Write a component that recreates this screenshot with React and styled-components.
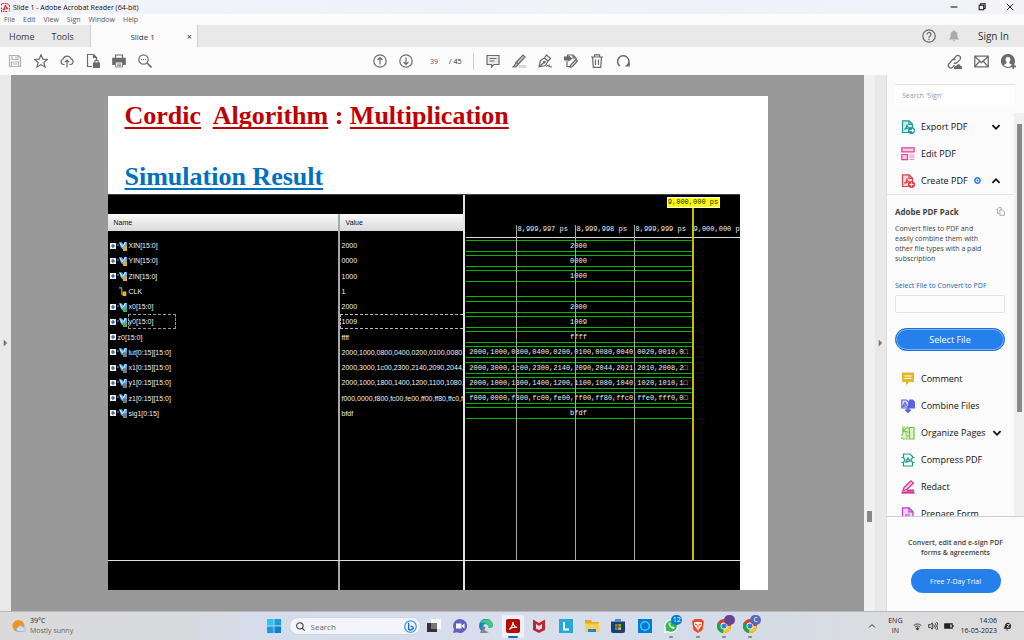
import { useState } from 'react';
import styled, { createGlobalStyle } from 'styled-components';

const GlobalStyle = createGlobalStyle`
    * { box-sizing: border-box; }
    body { margin: 0; font-family: 'Open Sans', 'Noto Sans', sans-serif; color: #333; }
    button, input { font-family: inherit; }
    button { border: 0; background: none; padding: 0; color: inherit; display: flex; align-items: center; justify-content: center; }
    h1, h2, h3, p { margin: 0; }
`

const signals = [
    { name: 'XIN[15:0]', value: '2000', wave: '2000', mark: '#e8a828' },
    { name: 'YIN[15:0]', value: '0000', wave: '0000', mark: '#e8a828' },
    { name: 'ZIN[15:0]', value: '1000', wave: '1000', mark: '#e8a828' },
    { name: 'CLK', value: '1', clock: true },
    { name: 'x0[15:0]', value: '2000', wave: '2000', mark: '#4fae45' },
    { name: 'y0[15:0]', value: '1009', wave: '1009', mark: '#4fae45', selected: true },
    { name: 'z0[15:0]', value: 'ffff', wave: 'ffff' },
    { name: 'lut[0:15][15:0]', value: '2000,1000,0800,0400,0200,0100,0080,00', wave: '2000,1000,0800,0400,0200,0100,0080,0040,0020,0010,0□', mark: '#777' },
    { name: 'x1[0:15][15:0]', value: '2000,3000,1c00,2300,2140,2090,2044,20', wave: '2000,3000,1c00,2300,2140,2090,2044,2021,2010,2008,2□', mark: '#777' },
    { name: 'y1[0:15][15:0]', value: '2000,1000,1800,1400,1200,1100,1080,10', wave: '2000,1000,1800,1400,1200,1100,1080,1040,1020,1010,1□', mark: '#777' },
    { name: 'z1[0:15][15:0]', value: 'f000,0000,f800,fc00,fe00,ff00,ff80,ffc0,f', wave: 'f000,0000,f800,fc00,fe00,ff00,ff80,ffc0,ffe0,fff0,0□', mark: '#777' },
    { name: 'sig1[0:15]', value: 'bfdf', wave: 'bfdf', mark: '#777' },
];

const Svg = styled.svg`
    display: block;
    flex: none;
    width: ${(p) => p.$size || 14}px;
    height: ${(p) => p.$size || 14}px;
    fill: none;
    stroke: currentColor;
    stroke-width: ${(p) => p.$stroke || 1.2};
`

const ClockSvg = styled(Svg)`
    width: 17px;
    height: 11px;
`

function Icon({ size, stroke, children }) {
    return <Svg viewBox="0 0 14 14" $size={size} $stroke={stroke} aria-hidden="true">{children}</Svg>;
}

/* toolbar drawings, all on a 14 unit grid */
const icons = {
    save: <g stroke="#b4b4b4"><path d="M1.5 1.5h9l2 2v9h-11zM4 1.5v4h6v-4M3.5 12.500v-4.500h7v4.500M8 2.500v2M5 10h4" /></g>,
    star: <path d="M7 .8l1.800 4.300 4.600.400-3.500 3 1.100 4.500L7 10.600 3 13l1.100-4.500-3.500-3 4.600-.400z" />,
    cloud: <path d="M4.500 10.500H3.500a2.800 2.800 0 0 1-.3-5.500 4 4 0 0 1 7.600-.2 2.900 2.900 0 0 1-.3 5.700H9.500M7 13.500V6M4.800 8.200L7 6l2.200 2.200" />,
    fileLock: <><path d="M6 12.500H1.500v-12h6l3 3v3M7.500.500v3h3" /><path d="M7.500 9h6v4.500h-6z" fill="currentColor" /><path d="M8.800 9V7.800a1.700 1.700 0 0 1 3.400 0V9" /></>,
    print: <><path d="M3.500 4V1h7v3" /><path d="M.8 4.300h12.400v6H11V8H3v2.300H.8z" fill="currentColor" /><path d="M3.500 8v5h7V8M5 10h4M5 11.500h4" strokeWidth=".8" /></>,
    zoom: <><circle cx="5.500" cy="5.500" r="4.700" /><path d="M9 9l4.500 4.500" strokeWidth="1.600" /><path d="M3 5.500h1M5 5.500h1M7 5.500h1" /></>,
    up: <><circle cx="7" cy="7" r="6.200" /><path d="M7 10.500v-7M4.500 6L7 3.500 9.500 6" /></>,
    down: <><circle cx="7" cy="7" r="6.200" /><path d="M7 3.500v7M4.500 8L7 10.500 9.500 8" /></>,
    comment: <path d="M1 1.500h12v9H8l-2.500 2.500v-2.500H1zM3.500 4.500h7M3.500 7h5" fill="#e9e9e9" />,
    marker: <><path d="M7 12.500h7" stroke="#d8d8d8" strokeWidth="3" /><path d="M4 8.500L11 1l2.200 2L6.500 10zM4 8.500L3.200 10.500 1 13h3l1.200-1.500L6.500 10z" fill="#c8c8c8" /></>,
    sign: <><path d="M1 12.800L2.500 6.500 6.500 4l3.500 3-2.500 4.500zM1 12.800L6 8.500M6.500 4L8.500 1 12.500 4.500 10 7M8.500 12.800c1.500-2.500 1.500 0 2.500-1.300 0 1.300 1 1.300 2.800 1.300" /><circle cx="6.300" cy="8.200" r=".8" fill="currentColor" /></>,
    edit: <><path d="M3.500 3V1H9l3 3v2M9 1v3h3M3 7v5.500h3.500" /><path d="M.5 3h4v3h-4z" fill="currentColor" /><path d="M5 2.500l2.500 2L5 6.500z" fill="currentColor" /><path d="M13.500 7L8.500 12.500l-2.300.8.500-2.300L12 5.500z" fill="#ddd" /></>,
    trash: <path d="M1 3h12M4.500 3V.8h5V3M2.500 3l.8 10.300h7.400L11.500 3M5.500 5.500v5.500M8.500 5.500v5.500" />,
    rotate: <><path d="M3.800 12A5.700 5.700 0 1 1 11.800 11" strokeWidth="1.500" /><path d="M13.800 7.500v5H8.800z" fill="currentColor" stroke="none" /></>,
    link: <><path d="M5.500 5.500l3-3.500a2.400 2.400 0 0 1 3.700 3L9.500 8a2.400 2.400 0 0 1-3 .3M8 5.500a2.400 2.400 0 0 0-3.300.3l-3 3.500a2.400 2.400 0 0 0 3.500 3.200L7 10.500" /><path d="M7 13.500c0-2 1.500-2 2-2 1-2 3-1.500 3 0 2 0 2 2 1 2z" fill="currentColor" /></>,
    mail: <path d="M.7 2h12.600v10H.7zM1 2.500l6 5.500 6-5.500M1 11.500l4.500-5M13 11.500l-4.500-5" />,
    person: <><circle cx="6.500" cy="6.500" r="6" fill="currentColor" /><path d="M6.500 2.500a2.400 2.700 0 0 1 1.300 4.900v1.200l2.700 1.600a5 5 0 0 1-8 0l2.700-1.600V7.400A2.400 2.700 0 0 1 6.500 2.500z" fill="#fff" stroke="none" /><path d="M11.500 9v5M9 11.500h5" strokeWidth="1.600" /></>,
    help: <><circle cx="7" cy="7" r="6.200" /><path d="M5 5.500a2 2 0 1 1 2.800 1.800c-.8.400-.8.700-.8 1.400M7 9.800v1.200" /></>,
    bell: <path d="M7 0l1 1.300c2.500.7 3 2.700 3 5.200 0 2 .6 3 2 4.500H1c1.400-1.500 2-2.500 2-4.500 0-2.500.500-4.500 3-5.200zM5.500 12h3L7 13.800z" fill="#aaa" stroke="none" />,
};

const Screen = styled.div`
    display: flex;
    flex-direction: column;
    height: 100vh;
    overflow: hidden;
    background: #fbfbfb;
`

const TitleBar = styled.header`
    display: flex;
    align-items: center;
    gap: 3px;
    height: 14px;
    padding: 0 10px 0 1px;
    font-size: 7px;
    color: #111;
    background: linear-gradient(90deg, #f3f3f8, #edf2fb 40%, #edf3f7 55%, #edf2fb 75%, #f3f3f8);
`

const WindowButtons = styled.div`
    display: flex;
    gap: 20px;
    margin-left: auto;
`

const MenuBar = styled.nav`
    display: flex;
    gap: 8px;
    height: 11px;
    padding-left: 4px;
    button { font-size: 7px; line-height: 11px; color: #555; }
`

const TabBar = styled.div`
    display: flex;
    height: 22px;
    background: #e9e9e9;
    font-size: 8px;
    color: #333;
`

const HomeTabs = styled.div`
    display: flex;
    gap: 17px;
    width: 90px;
    padding-left: 9px;
    button { font-size: 9px; }
`

const ActiveTab = styled.div`
    display: flex;
    align-items: center;
    justify-content: flex-end;
    gap: 32px;
    width: 108px;
    padding-right: 5px;
    background: #fbfbfb;
    border: solid #d0d0d0;
    border-width: 0 1px;
    button { font-size: 9px; }
`

const Account = styled.div`
    display: flex;
    align-items: center;
    gap: 12px;
    margin-left: auto;
    padding-right: 15px;
    color: #666;
`

const SignIn = styled.button`
    margin-left: 6px;
    font-size: 10px;
    color: #333;
`

const Toolbar = styled.div`
    display: flex;
    align-items: center;
    height: 28px;
    padding-right: 8px;
    color: #6b6b6b;
`

const Tools = styled.div`
    display: flex;
    align-items: center;
    gap: 12px;
    padding-left: 8px;
    min-width: ${(p) => p.$wide ? '365px' : '0'};
    margin-left: ${(p) => p.$end ? 'auto' : '0'};
`

const PageBox = styled.label`
    display: flex;
    align-items: center;
    gap: 7px;
    font-size: 7px;
    color: #222;
    padding: 0 12px 0 5px;
    border-right: 1px solid #ccc;
    height: 17px;
    input { width: 12px; border: 0; padding: 0; background: none; font-size: 7px; color: #555; }
`

const Body = styled.div`
    display: flex;
    flex: 1;
    min-height: 0;
`

const Rail = styled.button`
    width: 11px;
    background: #e9e9e9;
    color: #777;
`

const Desk = styled.main`
    flex: 1;
    min-width: 0;
    padding: 21px 10px;
    background: #999;
    overflow: hidden;
`

const Slide = styled.article`
    max-width: 660px;
    margin: 0 auto;
    padding-top: 3px;
    background: #fff;
    font-family: 'Liberation Serif', serif;
`

const SlideHeading = styled.h1`
    padding-left: 17px;
    height: ${(p) => p.$sub ? '34px' : '61px'};
    font-size: 26px;
    line-height: 34px;
    font-weight: 700;
    white-space: pre;
    color: ${(p) => p.$sub ? '#0070c0' : '#c00000'};
    u { text-decoration-thickness: 2px; text-underline-offset: 3px; text-decoration-skip-ink: none; }
`

const Simulator = styled.section`
    display: grid;
    grid-template-columns: 355px 2px 1fr;
    max-width: 632px;
    height: 396px;
    background: #000;
    color: #f0f0f0;
    border-top: 1px solid #444;
    font: 7px/10px 'Liberation Sans', sans-serif;
`

const Divider = styled.div`
    background: #e4e4e4;
`

const Pane = styled.div`
    position: relative;
    display: flex;
    flex-direction: column;
    min-width: 0;
    overflow: hidden;
`

const PaneFoot = styled.div`
    height: 30px;
    margin-top: auto;
    border-top: 1px solid #ddd;
`

const SignalPane = styled(Pane)`
    padding-top: 19px;
    background: linear-gradient(#a8a8a8, #a8a8a8) 230px 19px / 2px 100% no-repeat;
`

const SignalTable = styled.table`
    display: block;
    thead { display: block; margin-bottom: 7px; }
    tbody { display: grid; grid-template-rows: repeat(12, 1fr); height: 183px; }
    tr { display: grid; grid-template-columns: 230px 123px; column-gap: 2px; align-items: center; }
    th, td { padding: 0; min-width: 0; white-space: nowrap; text-align: left; font-weight: 400; }
    th { height: 17px; padding-left: 6px; line-height: 17px; color: #111; background: linear-gradient(#fafafa, #d9d9dc); }
`

const NameCell = styled.td`
    display: flex;
    align-items: center;
    gap: 1px;
    padding-left: 2px !important;
`

const SignalName = styled.span`
    line-height: 13px;
    border: 1px dashed ${(p) => p.$selected ? '#999' : 'transparent'};
    min-width: ${(p) => p.$selected ? '48px' : '0'};
`

const ValueCell = styled.td`
    overflow: hidden;
    padding-left: 1px !important;
    line-height: 13px;
    border: 1px dashed ${(p) => p.$selected ? '#bbb' : 'transparent'};
    border-right: 0;
`

const WavePane = styled(Pane)`
    font-family: 'Liberation Mono', monospace;
`

const Ruler = styled.div`
    height: 43px;
    flex: none;
    margin-left: 1px;
    border-bottom: 1px solid #ddd;
`

const Waves = styled.div`
    display: grid;
    grid-template-rows: repeat(12, 1fr);
    align-items: center;
    width: 227px;
    height: 183px;
    margin-left: 1px;
`

const Wave = styled.div`
    height: 12px;
    line-height: 11px;
    text-align: center;
    white-space: nowrap;
    border: 1px solid #00b800;
    border-top-color: ${(p) => p.$clock ? 'transparent' : '#00b800'};
    border-right-color: ${(p) => p.$clock ? 'transparent' : '#00b800'};
    border-left: 0;
    border-radius: 0 2px 2px 0;
`

const TimeGrid = styled.div`
    position: absolute;
    inset: 30px 0 30px 0;
    display: grid;
    grid-template-columns: 51px repeat(3, 59px) 1fr;
`

const Tick = styled.span`
    padding-left: 1px;
    line-height: 8px;
    white-space: nowrap;
    overflow: hidden;
    border-left: ${(p) => p.$last ? '0' : '1px solid #a8a8a8'};
`

const Cursor = styled.div`
    position: absolute;
    top: 2px;
    bottom: 30px;
    left: 202px;
    width: 53px;
    text-align: center;
    color: #222;
    background: linear-gradient(#c4c000, #c4c000) 25px 0 / 2px 100% no-repeat;
    span { display: block; background: #ffff00; border: 1px solid #fff; line-height: 9px; white-space: nowrap; }
`

const ScrollTrack = styled.div`
    display: flex;
    justify-content: center;
    width: ${(p) => p.$width}px;
    padding-top: ${(p) => p.$offset}px;
    background: #f0f0f0;
`

const ScrollThumb = styled.div`
    width: 5px;
    height: ${(p) => p.$length}px;
    background: #888;
`

const Panel = styled.aside`
    display: flex;
    flex-direction: column;
    width: 138px;
    background: #fbfbfb;
    border-left: 1px solid #ddd;
`

const Search = styled.input`
    flex: none;
    height: 22px;
    margin: 9px 9px 7px 8px;
    padding: 0 7px;
    min-width: 0;
    border: 0;
    border-top: 1px solid #e4e4e4;
    background: #fff;
    font-size: 7px;
    &::placeholder { color: #999; }
`

const PanelScroll = styled.div`
    display: flex;
    flex: 1;
    min-height: 0;
    overflow: hidden;
`

const PanelList = styled.div`
    flex: 1;
    min-width: 0;
`

const ToolItem = styled.button`
    width: 100%;
    height: 27px;
    gap: 6px;
    padding: 0 13px 0 14px;
    justify-content: flex-start;
    font-size: 9px;
    white-space: nowrap;
    color: #111;
    > :nth-child(3):last-child, > :nth-child(4) { margin-left: auto; }
`

const Pack = styled.section`
    padding: 12px 9px 14px 8px;
    border-top: 1px solid #e2e2e2;
    font-size: 7px;
    line-height: 10px;
    color: #444;
    h3 { display: flex; justify-content: space-between; font-size: 8px; line-height: 10px; margin-bottom: 7px; color: #444; }
    label { display: block; margin-top: 17px; color: #2463a8; white-space: nowrap; }
    input { width: 100%; height: 18px; margin: 4px 0 15px; display: block; border: 1px solid #e4e4e4; border-radius: 2px; background: #fdfdfd; }
`

const BlueButton = styled.button`
    height: ${(p) => p.$small ? '24px' : '23px'};
    width: ${(p) => p.$small ? '90px' : '100%'};
    font-size: ${(p) => p.$small ? '7px' : '9px'};
    border-radius: 12px;
    border: ${(p) => p.$small ? '0' : '1px solid #1b6fd6'};
    box-shadow: ${(p) => p.$small ? 'none' : 'inset 0 0 0 1px #80b4f4'};
    background: #2680eb;
    color: #fff;
`

const Trial = styled.footer`
    display: flex;
    flex-direction: column;
    align-items: center;
    height: 95px;
    padding-top: 21px;
    border-top: 1px solid #ccc;
    font-size: 7px;
    line-height: 10px;
    text-align: center;
    color: #444;
    font-weight: 600;
    p { margin-bottom: 11px; }
`

const Taskbar = styled.footer`
    display: grid;
    grid-template-columns: 1fr auto 1fr;
    align-items: center;
    height: 29px;
    border-top: 1px solid #b8b8bc;
    background: linear-gradient(90deg, #dadada, #d9dadd 17%, #d5dcec 26%, #d8deec 50%, #d3dce8 72%, #dcdcde 88%, #dcdcdc);
`

const Weather = styled.div`
    display: flex;
    align-items: center;
    gap: 4px;
    padding-left: 12px;
    font-size: 7px;
    line-height: 10px;
    color: #666;
    strong { display: block; font-weight: 400; color: #222; }
`

const Dock = styled.div`
    display: flex;
    align-items: center;
    padding-left: 6px;
`

const TaskSearch = styled.label`
    display: flex;
    align-items: center;
    gap: 6px;
    width: 132px;
    height: 18px;
    margin-left: 8px;
    padding: 0 3px 0 6px;
    border-radius: 9px;
    border: 1px solid #d0d4e0;
    background: #f3f5fa;
    input { flex: 1; min-width: 0; border: 0; padding: 0; background: none; font-size: 8px; }
    input::placeholder { color: #666; }
`

const Apps = styled.div`
    display: grid;
    grid-template-columns: repeat(13, 1fr);
    width: 343px;
`

const AppButton = styled.button`
    position: relative;
    justify-self: center;
    width: 22px;
    height: 23px;
    border-radius: 2px;
    background: ${(p) => p.$active ? '#eef1f8' : 'none'};
    &::after {
        content: '';
        position: absolute;
        bottom: 0;
        width: ${(p) => p.$active ? '10px' : '4px'};
        height: 2px;
        border-radius: 1px;
        background: ${(p) => p.$active ? '#0a6fd0' : p.$open ? '#888' : 'transparent'};
    }
`

const Badge = styled.span`
    position: absolute;
    top: 0;
    right: 0;
    width: 11px;
    height: 10px;
    border-radius: 5px;
    background: ${(p) => p.$color};
    color: #fff;
    font-size: 7px;
    line-height: 10px;
`

const Tray = styled.div`
    display: flex;
    align-items: center;
    justify-content: flex-end;
    gap: 6px;
    padding-right: 12px;
    font-size: 7px;
    line-height: 10px;
    color: #222;
    text-align: center;
    > svg:first-child { margin-right: 6px; }
    > span:first-of-type { margin-right: 5px; }
    span:last-of-type { text-align: right; }
`

function Chevron({ up }) {
    return <Icon size={10} stroke={2.6}><path d={up ? 'M2 9.500l5-5 5 5' : 'M2 4.500l5 5 5-5'} /></Icon>;
}

function Doc({ color, badge }) {
    return (
        <g stroke={color}>
            <path d="M1.500.800h6.500l3.500 3.500v8.200h-10z" fill={color} fillOpacity=".18" />
            <path d="M8 .800v3.500h3.500M3.500 9.500c1.500-1 2.500-3 2.500-5 0 2 1.500 3.500 3 3.500-2 0-4 .5-5.500 1.500z" />
            <circle cx="10.500" cy="10.500" r="3" fill={color} /><path d={badge} stroke="#fff" />
        </g>
    );
}

const toolIcons = {
    export: <Doc color="#1c9a92" badge="M8.500 10.500h4M11 9l1.500 1.500L11 12" />,
    editPdf: <g stroke="#dc45a0"><path d="M.8.800h12.400v4H.8zM.8 7.500h5.700v5.200H.8z" fill="#f9c8e4" /><path d="M8.500 8h5M8.500 10.200h5M8.500 12.500h5" stroke="#f08cc8" /></g>,
    create: <Doc color="#e03f48" badge="M10.500 8.500v4M8.500 10.500h4" />,
    comment: <><path d="M1 .500h12v9.500H8l-3 3.500V10H1z" fill="#e0b828" stroke="none" /><path d="M3.500 4h7M3.500 6.500h7" stroke="#fff" /></>,
    combine: <g stroke="#6161e6"><path d="M.8 1h4.700l2 2v6H.8z" fill="#dedefa" /><path d="M8.500 1h3l2 2v6h-5z" fill="#6161e6" /><path d="M2 7.500l2-4 1.500 3z" /><path d="M7 7v6M4.500 10.500L7 13l2.500-2.500" strokeWidth="1.800" /></g>,
    organize: <g stroke="#7cc444"><path d="M8.500 1.500H13v11.500H8.500z" fill="#dff2d0" /><path d="M1 7h4.500v6H1z" fill="#dff2d0" strokeDasharray="2 1" /><path d="M1 1h3M7 .500v13" strokeDasharray="3 1" /><path d="M6 1.500L2 5M2 2v3.500h4" strokeWidth="1.500" /></g>,
    compress: <g stroke="#1c9a92"><path d="M2.500 4V1h6.500l2.500 2.500V4M2.500 10v3h9v-3" /><path d="M2 4.500h10v5H2z" fill="#d2efed" stroke="none" /><path d="M.5 4.500h2L4 7 2.500 9.500h-2M13.500 4.500h-2L10 7l1.500 2.500h2M5 9l2-4 2 3z" /></g>,
    redact: <g stroke="#d8358c"><path d="M.500 12.500h13" strokeWidth="2.200" /><path d="M2 10.500L3 7.500 10 .800l2.500 2.400-7 6.500z" fill="#f8c4df" /><path d="M6 10.500h7" strokeWidth="2" /></g>,
    prepare: <g stroke="#b63ec8"><path d="M1.500.800h6.500l4 4v8.500h-10.500z" fill="#f0d0f4" /><path d="M8 .800v4h4M4 8h5" /></g>,
};

function PanelItem({ icon, text, chevron, plus }) {
    return (
        <ToolItem>
            <Icon>{toolIcons[icon]}</Icon>
            <span>{text}</span>
            {plus && <Icon size={7}><circle cx="7" cy="7" r="5.300" fill="#fff" stroke="#2680eb" strokeWidth="3" /><path d="M7 4.500v5M4.500 7h5" stroke="#2680eb" strokeWidth="1.500" /></Icon>}
            {chevron && <Chevron up={chevron === 'up'} />}
        </ToolItem>
    );
}

function SignalIcons({ signal }) {
    if (signal.clock) {
        return <ClockSvg viewBox="0 0 17 12"><path d="M9 2h3v7h2" stroke="#78b070" /><path d="M13 6h4v5h-4z" fill="#e8b830" stroke="none" /></ClockSvg>;
    }
    return (
        <>
            <Svg viewBox="0 0 6 6" $size={6}><path d="M0 0h6v6H0z" fill="#eee" stroke="none" /><path d="M1 3h4M3 1v4" stroke="#224a9a" /></Svg>
            {signal.mark && (
                <Svg viewBox="0 0 10 10" $size={10}>
                    <path d="M0 4h2" stroke="#999" />
                    <path d="M2 1l3 .5 1.500 2L7.500 1H10v5L6 8.500 4 7z" fill="#55a9e4" stroke="none" />
                    <path d="M3 2l2.500 4M8.500 1l-2 4" stroke="#c9e8ff" />
                    <path d="M6 5.500h4V10H6z" fill={signal.mark} stroke="none" />
                </Svg>
            )}
        </>
    );
}

function Chrome() {
    return (
        <g stroke="none"><circle cx="7" cy="7" r="7" fill="#e33b2e" /><path d="M7 7L1 3.300A7 7 0 0 0 7 14z" fill="#25a04b" /><path d="M7 7h7a7 7 0 0 1-7 7l-1-.1z" fill="#f8c922" /><circle cx="7" cy="7" r="3.400" fill="#fff" /><circle cx="7" cy="7" r="2.600" fill="#377be8" /></g>
    );
}

const apps = [
    { label: 'Task view', art: <g stroke="none"><path d="M4 0h10v10H4z" fill="#f8f8f8" /><path d="M0 4h10v9H0z" fill="#333" /><path d="M4 4h6v6H4z" fill="#777" /></g> },
    { label: 'Chat', art: <g stroke="none"><path d="M7 0a7 7 0 1 1-3 13.300L0 14l1-3.500A7 7 0 0 1 7 0z" fill="#6460bd" /><path d="M3 4.500h5.500v5H3zM9 6.500l2.500-2v5L9 7.500z" fill="#fff" /></g> },
    { label: 'Edge', art: <g stroke="none"><path d="M0 7a7 7 0 0 1 14-.5C14 9 10 9.500 9 8c1-3-3-4-4.500-2C2 9 5 13 10 13A7 7 0 0 1 0 7z" fill="#1685cf" /><path d="M1 4a7 7 0 0 1 13 2.500C14 9 10 9.500 9 8c0-4-5-5-8-4z" fill="#43c77a" /><circle cx="4.500" cy="9" r="1.800" fill="#777" /><path d="M1 14c0-4 7-4 7 0z" fill="#888" /></g> },
    { label: 'Acrobat', active: true, art: <><rect width="14" height="14" rx="2" fill="#b30b00" stroke="none" /><path d="M3 10.500c2-1 4-4.500 4-7.500 0 3 2 5.500 4.200 5.500C9 8 5.500 8.500 3 10.500z" stroke="#fff" /></> },
    { label: 'McAfee', art: <path d="M1 .500l6 3.500 6-3.500V11l-6 3-6-3zM4 5v4.500L7 11l3-1.500V5L7 7z" fill="#bd2630" fillRule="evenodd" stroke="none" /> },
    { label: 'Lenovo', art: <><path d="M0 0h14v14H0z" fill="#27a9d6" stroke="none" /><path d="M5 3v7.500h5" stroke="#fff" strokeWidth="2" /></> },
    { label: 'Files', art: <g stroke="none"><path d="M0 1h6l1 2h7v10H0z" fill="#e6a81c" /><path d="M0 4.500h14V13H0z" fill="#ffd057" /><path d="M3 10h8v3H3z" fill="#1686d0" /></g> },
    { label: 'Store', art: <g stroke="none"><path d="M0 2.500h14V12a2 2 0 0 1-2 2H2a2 2 0 0 1-2-2z" fill="#1c3f70" /><path d="M4 2.500V0h6v2.500" fill="#3c8fd0" /><path d="M4 5h2.700v2.700H4z" fill="#f25022" /><path d="M7.300 5H10v2.700H7.300z" fill="#7fba00" /><path d="M4 8.300h2.700V11H4z" fill="#00a4ef" /><path d="M7.300 8.300H10V11H7.300z" fill="#ffb900" /></g> },
    { label: 'Alexa', art: <><path d="M0 0h14v14H0z" fill="#0879d8" stroke="none" /><circle cx="7" cy="7" r="4.300" stroke="#35d0f4" strokeWidth="1.500" /></> },
    { label: 'WhatsApp', open: true, badge: '12', color: '#087bd0', art: <><path d="M7 .800a6.300 6.300 0 1 1-3 11.700L.800 13.300l.8-3.300A6.300 6.300 0 0 1 7 .800z" fill="#32b84e" stroke="#fff" /><path d="M4.500 4c0 3 2.500 5.500 5.500 6l.5-1.800L9 7.500l-1 .8L6 6l.7-1L6 3.500z" fill="#fff" stroke="none" /></> },
    { label: 'Brave', open: true, art: <><path d="M3.500 0h7l1 1.300L13 2l-.5 3-1 6L7 14l-4.500-3L1.500 5 1 2l1.500-.7z" fill="#f0471f" stroke="none" /><path d="M3 3.500l4-.7 4 .7-.5 3.500-2 2L7 12 5.500 9l-2-2z" fill="#fff" stroke="none" /><path d="M4 5l2 1M10 5L8 6M7 6v2.500" stroke="#f0471f" /></> },
    { label: 'Chrome', open: true, badge: ' ', color: '#68438f', art: <Chrome /> },
    { label: 'Chrome C', open: true, badge: 'C', color: '#5968b8', art: <Chrome /> },
];

export default function App() {
    const [page, setPage] = useState('39');
    const [query, setQuery] = useState('');

    return (
        <Screen>
            <GlobalStyle />
            <TitleBar>
                <Svg viewBox="0 0 14 14" $size={9} $stroke={1.6}><g stroke="#e0302a"><path d="M.8 4V.800h9l3.400 3.500V13M.8 7v6.200h9" strokeDasharray="3 1" /><path d="M3 11c2-2 3.500-5 4-8 .5 3 2 5 4 6-3-.5-5 .5-8 2z" /></g></Svg>
                <span>Slide 1 - Adobe Acrobat Reader (64-bit)</span>
                <WindowButtons>
                    <button aria-label="Minimize"><Icon size={8} stroke={1.8}><path d="M1 7h12" /></Icon></button>
                    <button aria-label="Restore"><Icon size={8} stroke={1.8}><path d="M2 4h8v8H2zM4.500 4V1.500h8v8H10" /></Icon></button>
                    <button aria-label="Close"><Icon size={8} stroke={1.6}><path d="M1.500 1.500l11 11M12.500 1.500l-11 11" /></Icon></button>
                </WindowButtons>
            </TitleBar>
            <MenuBar>
                {['File', 'Edit', 'View', 'Sign', 'Window', 'Help'].map((item) => <button key={item}>{item}</button>)}
            </MenuBar>
            <TabBar>
                <HomeTabs><button>Home</button><button>Tools</button></HomeTabs>
                <ActiveTab><span>Slide 1</span><button aria-label="Close tab">×</button></ActiveTab>
                <Account>
                    <button aria-label="Help"><Icon>{icons.help}</Icon></button>
                    <button aria-label="Notifications"><Icon size={12}>{icons.bell}</Icon></button>
                    <SignIn>Sign In</SignIn>
                </Account>
            </TabBar>
            <Toolbar>
                <Tools $wide>
                    {['save', 'star', 'cloud', 'fileLock', 'print', 'zoom'].map((name) => <button key={name} aria-label={name}><Icon>{icons[name]}</Icon></button>)}
                </Tools>
                <Tools>
                    <button aria-label="Previous page"><Icon>{icons.up}</Icon></button>
                    <button aria-label="Next page"><Icon>{icons.down}</Icon></button>
                    <PageBox>
                        <input value={page} onChange={(e) => setPage(e.target.value)} aria-label="Page" />
                        <span>/ 45</span>
                    </PageBox>
                    {['comment', 'marker', 'sign', 'edit', 'trash', 'rotate'].map((name) => <button key={name} aria-label={name}><Icon>{icons[name]}</Icon></button>)}
                </Tools>
                <Tools $end>
                    {['link', 'mail', 'person'].map((name) => <button key={name} aria-label={name}><Icon size={15}>{icons[name]}</Icon></button>)}
                </Tools>
            </Toolbar>

            <Body>
                <Rail aria-label="Open navigation"><Icon size={8}><path d="M3 1l6 6-6 6z" fill="currentColor" stroke="none" /></Icon></Rail>
                <Desk>
                    <Slide>
                        <SlideHeading><u>Cordic</u>{'  '}<u>Algorithm</u> : <u>Multiplication</u></SlideHeading>
                        <SlideHeading as="h2" $sub><u>Simulation Result</u></SlideHeading>
                        <Simulator>
                            <SignalPane>
                                <SignalTable>
                                    <thead><tr><th>Name</th><th>Value</th></tr></thead>
                                    <tbody>
                                        {signals.map((signal) => (
                                            <tr key={signal.name}>
                                                <NameCell>
                                                    <SignalIcons signal={signal} />
                                                    <SignalName $selected={signal.selected}>{signal.name}</SignalName>
                                                </NameCell>
                                                <ValueCell $selected={signal.selected}>{signal.value}</ValueCell>
                                            </tr>
                                        ))}
                                    </tbody>
                                </SignalTable>
                                <PaneFoot />
                            </SignalPane>
                            <Divider />
                            <WavePane>
                                <Ruler />
                                <Waves>
                                    {signals.map((signal) => <Wave key={signal.name} $clock={signal.clock}>{signal.wave}</Wave>)}
                                </Waves>
                                <PaneFoot />
                                <TimeGrid>
                                    <span />
                                    <Tick>8,999,997 ps</Tick>
                                    <Tick>8,999,998 ps</Tick>
                                    <Tick>8,999,999 ps</Tick>
                                    <Tick $last>9,000,000 ps</Tick>
                                </TimeGrid>
                                <Cursor><span>9,000,000 ps</span></Cursor>
                            </WavePane>
                        </Simulator>
                    </Slide>
                </Desk>
                <ScrollTrack $width={11} $offset={436}><ScrollThumb $length={11} /></ScrollTrack>
                <Rail aria-label="Hide tools"><Icon size={8}><path d="M3 1l6 6-6 6z" fill="currentColor" stroke="none" /></Icon></Rail>
                <Panel>
                    <Search placeholder="Search 'Sign'" aria-label="Search tools" value={query} onChange={(e) => setQuery(e.target.value)} />
                    <PanelScroll>
                        <PanelList>
                            <PanelItem icon="export" text="Export PDF" chevron="down" />
                            <PanelItem icon="editPdf" text="Edit PDF" />
                            <PanelItem icon="create" text="Create PDF" plus chevron="up" />
                            <Pack>
                                <h3>Adobe PDF Pack <Icon size={9}><g stroke="#999"><path d="M5 10H2.500V4H1l3-3h4v3M6 4.500h4l3 3V13H6z" /></g></Icon></h3>
                                <p>Convert files to PDF and<br />easily combine them with<br />other file types with a paid<br />subscription</p>
                                <label htmlFor="convert">Select File to Convert to PDF</label>
                                <input id="convert" />
                                <BlueButton>Select File</BlueButton>
                            </Pack>
                            <PanelItem icon="comment" text="Comment" />
                            <PanelItem icon="combine" text="Combine Files" />
                            <PanelItem icon="organize" text="Organize Pages" chevron="down" />
                            <PanelItem icon="compress" text="Compress PDF" />
                            <PanelItem icon="redact" text="Redact" />
                            <PanelItem icon="prepare" text="Prepare Form" />
                        </PanelList>
                        <ScrollTrack $width={10} $offset={11}><ScrollThumb $length={288} /></ScrollTrack>
                    </PanelScroll>
                    <Trial>
                        <p>Convert, edit and e-sign PDF<br />forms &amp; agreements</p>
                        <BlueButton $small>Free 7-Day Trial</BlueButton>
                    </Trial>
                </Panel>
            </Body>

            <Taskbar>
                <Weather>
                    <Icon><circle cx="6.500" cy="7" r="6" fill="#f29324" stroke="none" /><path d="M6 12.500a2.300 2.300 0 0 1 .3-4.500 3 3 0 0 1 5.200.5 2 2 0 0 1 .5 4z" fill="#c9defa" stroke="#7eaee8" strokeWidth=".6" /></Icon>
                    <span><strong>39°C</strong>Mostly sunny</span>
                </Weather>
                <Dock>
                    <button aria-label="Start"><Icon><path d="M0 0h6.600v6.600H0z" fill="#3bbcf2" stroke="none" /><path d="M7.400 0H14v6.600H7.400zM0 7.400h6.600V14H0z" fill="#1a9be2" stroke="none" /><path d="M7.400 7.400H14V14H7.400z" fill="#0a80d6" stroke="none" /></Icon></button>
                    <TaskSearch>
                        <Icon size={9} stroke={1.6}><circle cx="6" cy="6" r="5" /><path d="M9.500 9.500L13.500 13.500" /></Icon>
                        <input placeholder="Search" aria-label="Search" />
                        <Icon size={13}><circle cx="7" cy="7" r="6.200" stroke="#2d8edc" /><path d="M5 3v7l2 1 3-2-.5-1.500L7 6.500" stroke="#1670d4" strokeWidth="1.500" /></Icon>
                    </TaskSearch>
                    <Apps>
                        {apps.map((app) => (
                            <AppButton key={app.label} aria-label={app.label} $active={app.active} $open={app.open}>
                                <Icon>{app.art}</Icon>
                                {app.badge && <Badge $color={app.color}>{app.badge}</Badge>}
                            </AppButton>
                        ))}
                    </Apps>
                </Dock>
                <Tray>
                    <Icon size={8} stroke={1.6}><path d="M2 9.500l5-5 5 5" /></Icon>
                    <span>ENG<br />IN</span>
                    <Icon size={9} stroke={1.3}><path d="M1 5.500a8.500 8.500 0 0 1 12 0M3 8a5.500 5.500 0 0 1 8 0" /><circle cx="7" cy="10.500" r="1.500" fill="currentColor" /></Icon>
                    <Icon size={10}><path d="M1 5h2.500L6 2.500v9L3.500 9H1zM8 5a3 3 0 0 1 0 4M10 3a6 6 0 0 1 0 8M12 1.500a8 8 0 0 1 0 11" /></Icon>
                    <Icon size={10} stroke={1.5}><path d="M1 4h10.500v6H1zM13 6v2" /><path d="M2 5h6v4H2z" fill="currentColor" /></Icon>
                    <span>14:06<br />16-05-2023</span>
                    <Icon size={9}><path d="M2 10c2-2 1-7 4-8s6 1 6 4l-1 4zM5 12.500h3" fill="currentColor" /><path d="M6 4h4L6 8h4" stroke="#fff" /></Icon>
                </Tray>
            </Taskbar>
        </Screen>
    );
}
